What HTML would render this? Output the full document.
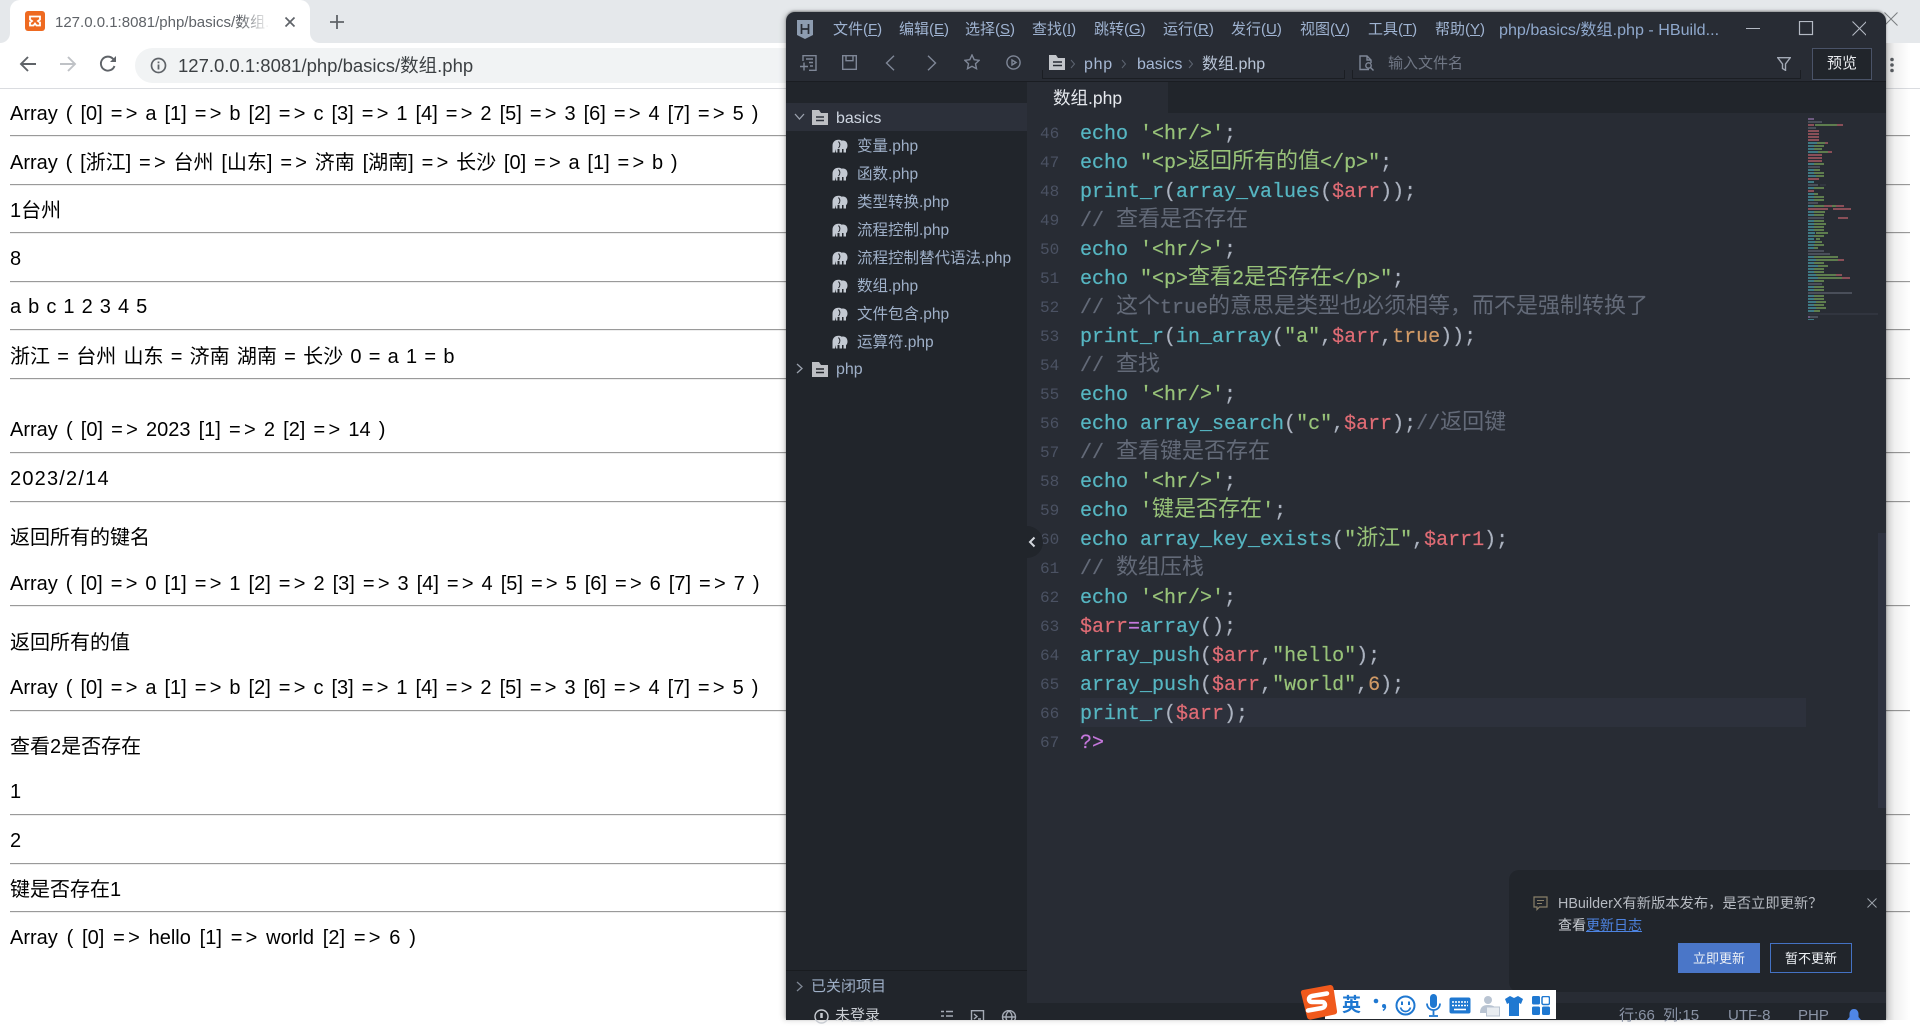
<!DOCTYPE html>
<html lang="zh"><head><meta charset="utf-8"><title>数组.php</title>
<style>
html,body{margin:0;padding:0;background:#fff}
body{width:1920px;height:1020px;position:relative;overflow:hidden;font-family:"Liberation Sans","Noto Sans CJK SC",sans-serif}
div,span,svg{position:absolute}
.l span,.m u{position:static}
.t{white-space:nowrap}
.p{left:10px;font-size:20px;line-height:30px;color:#000;white-space:nowrap;word-spacing:2.450px}
.p b{font-weight:400;letter-spacing:3.3px}
.h{left:10px;width:1900px;height:1px;background:#9a9a9a;border-bottom:1px solid #eee}
.m{top:19px;font-size:15px;line-height:22px;color:#9fb3d1;white-space:nowrap}
.m u{text-underline-offset:1px}
.f{left:857px;font-size:15.500px;line-height:24px;color:#9fb0c8;white-space:nowrap}
.e{left:832px}
.n{left:1040px;width:20px;font:16px/29px "Liberation Mono",monospace;color:#4b5263}
.l{left:1080px;margin-top:2px;font:20px/29px "Liberation Mono","Noto Sans CJK SC",monospace;color:#abb2bf;white-space:pre;-webkit-text-stroke:.2px}
.l i{font:22px/0 "Noto Sans CJK SC",sans-serif;font-style:normal;-webkit-text-stroke:0}
.c{color:#56b6c2}.g{color:#98c379}.r{color:#e06c75}.o{color:#d19a66}.x{color:#636a78}.v{color:#c678dd}
.ic{fill:none;stroke:#7f8797;stroke-width:1.4}
</style></head><body>

<!-- chrome -->
<div style="left:0;top:0;width:1920px;height:43px;background:#e5e8eb"></div>
<div style="left:10px;top:0;width:300px;height:43px;background:#fff;border-radius:10px 10px 0 0"></div>
<div style="left:0;top:33px;width:10px;height:10px;background:#fff"></div><div style="left:0;top:33px;width:10px;height:10px;background:#e5e8eb;border-radius:0 0 10px 0"></div>
<div style="left:310px;top:33px;width:10px;height:10px;background:#fff"></div><div style="left:310px;top:33px;width:10px;height:10px;background:#e5e8eb;border-radius:0 0 0 10px"></div>
<svg style="left:25px;top:11px" width="20" height="20" viewBox="0 0 20 20"><rect width="20" height="20" rx="3" fill="#ee6a21"/><path d="M5 5.500h3.500l3 0h3.500v3l-2 1.500 2 1.500v3h-3.500l-1.500-2-1.500 2H5v-3l2-1.500-2-1.500z" fill="none" stroke="#fff" stroke-width="1.800"/></svg>
<span class="t" style="left:55px;top:12px;width:220px;overflow:hidden;font-size:15px;line-height:22px;color:#5f6368">127.0.0.1:8081/php/basics/数组.php</span>
<div style="left:240px;top:8px;width:35px;height:28px;background:linear-gradient(90deg,rgba(255,255,255,0),#fff 85%)"></div>
<svg style="left:284px;top:16px" width="12" height="12"><path d="M1.500 1.500l9 9M10.500 1.500l-9 9" stroke="#5f6368" stroke-width="1.700"/></svg>
<svg style="left:329px;top:14px" width="16" height="16"><path d="M8 1v14M1 8h14" stroke="#5f6368" stroke-width="1.800"/></svg>
<div style="left:0;top:43px;width:1920px;height:45px;background:#fff"></div>
<div style="left:0;top:88px;width:1920px;height:1px;background:#dadce0"></div>
<svg style="left:19px;top:55px" width="18" height="18"><path d="M17 9H2M9 2L2 9l7 7" fill="none" stroke="#5f6368" stroke-width="1.900"/></svg>
<svg style="left:59px;top:55px" width="18" height="18"><path d="M1 9h15M9 2l7 7-7 7" fill="none" stroke="#bfc2c6" stroke-width="1.900"/></svg>
<svg style="left:99px;top:55px" width="18" height="18"><path d="M15.500 11a7 7 0 1 1-1.500-7.200L16.500 6" fill="none" stroke="#5f6368" stroke-width="1.900"/><path d="M17 1v6h-6z" fill="#5f6368"/></svg>
<div style="left:135px;top:48px;width:700px;height:35px;border-radius:18px;background:#f1f3f4"></div>
<svg style="left:150px;top:57px" width="17" height="17"><circle cx="8.500" cy="8.500" r="7" fill="none" stroke="#5f6368" stroke-width="1.700"/><path d="M8.500 7.500v5M8.500 4.500v1.800" stroke="#5f6368" stroke-width="1.800"/></svg>
<span class="t" style="left:178px;top:52px;font-size:18.500px;line-height:27px;color:#3c4043">127.0.0.1:8081/php/basics/数组.php</span>
<svg style="left:1889px;top:57px" width="6" height="16"><circle cx="3" cy="2.500" r="1.800" fill="#5f6368"/><circle cx="3" cy="8" r="1.800" fill="#5f6368"/><circle cx="3" cy="13.500" r="1.800" fill="#5f6368"/></svg>
<svg style="left:1884px;top:12px" width="14" height="14"><path d="M.5.500l13 13M13.500.500l-13 13" stroke="#7a7d80" stroke-width="1"/></svg>

<!-- page -->
<span class="p" style="top:99px">Array ( [0] <b>=</b>&gt; a [1] <b>=</b>&gt; b [2] <b>=</b>&gt; c [3] <b>=</b>&gt; 1 [4] <b>=</b>&gt; 2 [5] <b>=</b>&gt; 3 [6] <b>=</b>&gt; 4 [7] <b>=</b>&gt; 5 )</span><div class="h" style="top:135px"></div>
<span class="p" style="top:148px;word-spacing:2.270px">Array ( [浙江] <b>=</b>&gt; 台州 [山东] <b>=</b>&gt; 济南 [湖南] <b>=</b>&gt; 长沙 [0] <b>=</b>&gt; a [1] <b>=</b>&gt; b )</span><div class="h" style="top:184px"></div>
<span class="p" style="top:196px">1台州</span><div class="h" style="top:232px"></div>
<span class="p" style="top:244px">8</span><div class="h" style="top:281px"></div>
<span class="p" style="top:292px;word-spacing:1.500px">a b c 1 2 3 4 5</span><div class="h" style="top:329px"></div>
<span class="p" style="top:342px;word-spacing:1.700px">浙江 = 台州 山东 = 济南 湖南 = 长沙 0 = a 1 = b</span><div class="h" style="top:378px"></div>
<span class="p" style="top:415px;word-spacing:2.600px">Array ( [0] <b>=</b>&gt; 2023 [1] <b>=</b>&gt; 2 [2] <b>=</b>&gt; 14 )</span><div class="h" style="top:452px"></div>
<span class="p" style="top:464px;letter-spacing:1.200px">2023/2/14</span><div class="h" style="top:501px"></div>
<span class="p" style="top:523px">返回所有的键名</span>
<span class="p" style="top:569px">Array ( [0] <b>=</b>&gt; 0 [1] <b>=</b>&gt; 1 [2] <b>=</b>&gt; 2 [3] <b>=</b>&gt; 3 [4] <b>=</b>&gt; 4 [5] <b>=</b>&gt; 5 [6] <b>=</b>&gt; 6 [7] <b>=</b>&gt; 7 )</span><div class="h" style="top:605px"></div>
<span class="p" style="top:628px">返回所有的值</span>
<span class="p" style="top:673px">Array ( [0] <b>=</b>&gt; a [1] <b>=</b>&gt; b [2] <b>=</b>&gt; c [3] <b>=</b>&gt; 1 [4] <b>=</b>&gt; 2 [5] <b>=</b>&gt; 3 [6] <b>=</b>&gt; 4 [7] <b>=</b>&gt; 5 )</span><div class="h" style="top:710px"></div>
<span class="p" style="top:732px">查看2是否存在</span>
<span class="p" style="top:777px">1</span><div class="h" style="top:814px"></div>
<span class="p" style="top:826px">2</span><div class="h" style="top:863px"></div>
<span class="p" style="top:875px">键是否存在1</span><div class="h" style="top:911px"></div>
<span class="p" style="top:923px;word-spacing:3.250px">Array ( [0] <b>=</b>&gt; hello [1] <b>=</b>&gt; world [2] <b>=</b>&gt; 6 )</span>

<!-- editor window -->
<div style="left:1886px;top:43px;width:24px;height:977px;background:linear-gradient(90deg,rgba(0,0,0,.2),rgba(0,0,0,.06) 35%,rgba(0,0,0,0))"></div>
<div style="left:786px;top:12px;width:1100px;height:1008px;background:#282c34;border-radius:9px 9px 0 0;box-shadow:0 -1px 2px rgba(0,0,0,.35),-2px 0 6px rgba(0,0,0,.18)"></div>

<svg style="left:796px;top:19px" width="18" height="21"><path d="M1 1h16v15l-8 4-8-4z" fill="#8d9cb0"/><path d="M5.500 5v10M12.500 5v10M5.500 10h7" stroke="#282c34" stroke-width="1.700"/></svg>
<span class="m" style="left:833px">文件(<u>F</u>)</span>
<span class="m" style="left:899px">编辑(<u>E</u>)</span>
<span class="m" style="left:965px">选择(<u>S</u>)</span>
<span class="m" style="left:1032px">查找(<u>I</u>)</span>
<span class="m" style="left:1094px">跳转(<u>G</u>)</span>
<span class="m" style="left:1163px">运行(<u>R</u>)</span>
<span class="m" style="left:1231px">发行(<u>U</u>)</span>
<span class="m" style="left:1300px">视图(<u>V</u>)</span>
<span class="m" style="left:1368px">工具(<u>T</u>)</span>
<span class="m" style="left:1435px">帮助(<u>Y</u>)</span>
<span class="m" style="left:1499px;font-size:16.100px;color:#8fa8cc">php/basics/数组.php - HBuild...</span>
<svg style="left:1746px;top:21px" width="120" height="15"><path d="M0 7.500h14" stroke="#b4bac4"/><rect x="53.500" y=".5" width="13" height="13" fill="none" stroke="#b4bac4" stroke-width="1.200"/><path d="M106.500.5l14 14M120.500.5l-14 14" stroke="#b4bac4" stroke-width="1.100"/></svg>

<!-- toolbar -->
<div style="left:786px;top:81px;width:1100px;height:1px;background:#1a1d22"></div>
<svg style="left:800px;top:55px" width="17" height="17"><path class="ic" d="M3 6V.7h13v14.600H9M6 4h7M9 7.500h4M10 11h3M0 11.500h8M4 7.500v8"/></svg>
<svg style="left:842px;top:55px" width="15" height="15"><path class="ic" d="M.7.7h13.600v13.600H.7zM4 .7v5h7v-5"/></svg>
<svg style="left:885px;top:55px" width="10" height="16"><path class="ic" d="M9 .7L1.500 8 9 15.300"/></svg>
<svg style="left:927px;top:55px" width="10" height="16"><path class="ic" d="M1 .7L8.500 8 1 15.300"/></svg>
<svg style="left:964px;top:54px" width="16" height="16"><path class="ic" d="M8 1l2.200 4.700 5 .6-3.700 3.400 1 5L8 12.300 3.500 14.700l1-5L.8 6.300l5-.6z"/></svg>
<svg style="left:1006px;top:55px" width="15" height="15"><circle class="ic" cx="7.500" cy="7.500" r="6.600"/><path class="ic" d="M6 5l4 2.500L6 10z"/></svg>
<svg style="left:1049px;top:55px" width="17" height="15"><path d="M0 0h7l2 3h7v12H0z" fill="#c3c6cb"/><path d="M4 7h9M4 10.500h9" stroke="#282c34" stroke-width="1.500"/></svg>
<svg style="left:1070px;top:59px" width="6" height="10"><path d="M1 1l3.500 4L1 9" fill="none" stroke="#5d6471"/></svg>
<span class="t" style="left:1084px;top:53px;font-size:16px;line-height:24px;color:#a6b8d4;letter-spacing:.7px">php</span>
<svg style="left:1121px;top:59px" width="6" height="10"><path d="M1 1l3.500 4L1 9" fill="none" stroke="#5d6471"/></svg>
<span class="t" style="left:1137px;top:53px;font-size:16px;line-height:24px;color:#a6b8d4">basics</span>
<svg style="left:1188px;top:59px" width="6" height="10"><path d="M1 1l3.500 4L1 9" fill="none" stroke="#5d6471"/></svg>
<span class="t" style="left:1202px;top:53px;font-size:16px;line-height:24px;color:#b8c4d6">数组.php</span>
<div style="left:1042px;top:70px;width:301px;height:8px;border:1px solid #1b1e23;border-top:0"></div>
<div style="left:1352px;top:70px;width:447px;height:8px;border:1px solid #1b1e23;border-top:0"></div>
<svg style="left:1359px;top:55px" width="16" height="16"><path class="ic" d="M10 14.500H1V1h7l4 4v3M8 1v4h4"/><circle class="ic" cx="9.500" cy="10.500" r="2.700"/><path class="ic" d="M11.500 12.500l3 3"/></svg>
<span class="t" style="left:1388px;top:53px;font-size:15px;line-height:22px;color:#707785">输入文件名</span>
<svg style="left:1777px;top:57px" width="14" height="14"><path class="ic" style="stroke:#a3aab6" d="M.7.700h12.600L8.500 7v6.300L5.500 11.500V7z"/></svg>
<div style="left:1812px;top:48px;width:58px;height:30px;border:1px solid #4a5368;background:#21252b"></div>
<span class="t" style="left:1827px;top:53px;font-size:15px;line-height:22px;color:#e8eaee">预览</span>

<!-- sidebar -->
<div style="left:786px;top:82px;width:241px;height:921px;background:#21252b"></div>
<div style="left:786px;top:103px;width:241px;height:28px;background:#2c303a"></div>
<svg style="left:794px;top:113px" width="11" height="8"><path d="M1 1l4.500 5L10 1" fill="none" stroke="#9aa1ad" stroke-width="1.300"/></svg>
<svg style="left:812px;top:110px" width="16" height="15"><path d="M0 0h7l2 3h7v12H0z" fill="#bdbfc3"/><path d="M4 7h8M4 10.500h8" stroke="#2c303a" stroke-width="1.500"/></svg>
<span class="f" style="left:836px;top:107px;font-size:16px;color:#ced5e0">basics</span>

<svg width="0" height="0" style="position:absolute"><defs><symbol id="el" viewBox="0 0 16 15"><path d="M.5 13.500V7C.5 3 3 .8 6.500.8c1.300 0 2.300.3 3.200.9C12.500.8 15.500 2.500 15.500 6.500c0 1.500-.5 2.800-1.500 3.700v3.300h-2.500V10H10v3.500H7.500V10H5.500v3.500H4V10l-1 3.500z" fill="#c3c9d2"/><path d="M6.500 2.500C8.200 4.500 8.200 7 6.500 9" fill="none" stroke="#21252b" stroke-width="1"/></symbol></defs></svg>
<svg class="e" style="top:139px" width="16" height="15"><use href="#el"/></svg><span class="f" style="top:135px">变量.php</span>
<svg class="e" style="top:167px" width="16" height="15"><use href="#el"/></svg><span class="f" style="top:163px">函数.php</span>
<svg class="e" style="top:195px" width="16" height="15"><use href="#el"/></svg><span class="f" style="top:191px">类型转换.php</span>
<svg class="e" style="top:223px" width="16" height="15"><use href="#el"/></svg><span class="f" style="top:219px">流程控制.php</span>
<svg class="e" style="top:251px" width="16" height="15"><use href="#el"/></svg><span class="f" style="top:247px">流程控制替代语法.php</span>
<svg class="e" style="top:279px" width="16" height="15"><use href="#el"/></svg><span class="f" style="top:275px">数组.php</span>
<svg class="e" style="top:307px" width="16" height="15"><use href="#el"/></svg><span class="f" style="top:303px">文件包含.php</span>
<svg class="e" style="top:335px" width="16" height="15"><use href="#el"/></svg><span class="f" style="top:331px">运算符.php</span>
<svg style="left:796px;top:363px" width="8" height="11"><path d="M1 1l5 4.500L1 10" fill="none" stroke="#9aa1ad" stroke-width="1.300"/></svg>
<svg style="left:812px;top:362px" width="16" height="15"><path d="M0 0h7l2 3h7v12H0z" fill="#bdbfc3"/><path d="M4 7h8M4 10.500h8" stroke="#21252b" stroke-width="1.500"/></svg>
<span class="f" style="left:836px;top:358px;font-size:16px">php</span>
<div style="left:786px;top:970px;width:241px;height:1px;background:#191c20"></div>
<svg style="left:796px;top:981px" width="8" height="11"><path d="M1 1l5 4.500L1 10" fill="none" stroke="#7f8794" stroke-width="1.300"/></svg>
<span class="t" style="left:811px;top:976px;font-size:15px;line-height:22px;color:#9fb0c8">已关闭项目</span>

<!-- status bar -->
<div style="left:786px;top:1003px;width:1100px;height:17px;background:#21252b"></div>
<svg style="left:814px;top:1009px" width="15" height="15"><circle class="ic" style="stroke:#c8ccd2" cx="7.500" cy="7.500" r="6.500"/><path d="M7.500 4v5" stroke="#c8ccd2" stroke-width="2.500"/></svg>
<span class="t" style="left:835px;top:1005px;font-size:15px;line-height:22px;color:#c8ccd2">未登录</span>
<svg style="left:941px;top:1010px" width="78" height="10"><path d="M0 1.500h3M5 1.500h7M0 6h3M5 6h7" stroke="#a5abb6" stroke-width="1.400"/><path class="ic" style="stroke:#a5abb6" d="M30.500.7h12v12h-12zM33 4l3 2.500L33 9M37 9h3"/><circle class="ic" style="stroke:#a5abb6" cx="68" cy="7" r="6.500"/><path class="ic" style="stroke:#a5abb6" d="M62 7h12M68 1c-4 3-4 9 0 12M68 1c4 3 4 9 0 12"/></svg>
<span class="t" style="left:1619px;top:1005px;font-size:15px;line-height:22px;color:#8a93a5">行:66&nbsp; 列:15</span>
<span class="t" style="left:1728px;top:1005px;font-size:15px;line-height:22px;color:#8a93a5">UTF-8</span>
<span class="t" style="left:1798px;top:1005px;font-size:15px;line-height:22px;color:#8a93a5">PHP</span>
<svg style="left:1847px;top:1009px" width="14" height="11"><path d="M7 0c3 0 4.500 2.500 4.500 5v3L14 11H0l2.500-3V5C2.500 2.500 4 0 7 0z" fill="#4f86e6"/></svg>

<!-- tabs -->
<div style="left:1027px;top:82px;width:859px;height:31px;background:#21252b"></div>
<div style="left:1027px;top:82px;width:141px;height:31px;background:#282c34"></div>
<span class="t" style="left:1053px;top:86px;font-size:17.500px;line-height:24px;color:#e6e9ee">数组.php</span>

<!-- code -->
<div style="left:1080px;top:698px;width:726px;height:29px;background:#2d313c"></div>
<div style="left:1878px;top:533px;width:8px;height:275px;background:#2f3340"></div>
<div class="n" style="top:120px">46</div><div class="l" style="top:118px"><span class="c">echo</span> <span class="g">'&lt;hr/&gt;'</span>;</div>
<div class="n" style="top:149px">47</div><div class="l" style="top:147px"><span class="c">echo</span> <span class="g">"&lt;p&gt;<i>返回所有的值</i>&lt;/p&gt;"</span>;</div>
<div class="n" style="top:178px">48</div><div class="l" style="top:176px"><span class="c">print_r</span>(<span class="c">array_values</span>(<span class="r">$arr</span>));</div>
<div class="n" style="top:207px">49</div><div class="l x" style="top:205px">// <i>查看是否存在</i></div>
<div class="n" style="top:236px">50</div><div class="l" style="top:234px"><span class="c">echo</span> <span class="g">'&lt;hr/&gt;'</span>;</div>
<div class="n" style="top:265px">51</div><div class="l" style="top:263px"><span class="c">echo</span> <span class="g">"&lt;p&gt;<i>查看</i>2<i>是否存在</i>&lt;/p&gt;"</span>;</div>
<div class="n" style="top:294px">52</div><div class="l x" style="top:292px">// <i>这个</i>true<i>的意思是类型也必须相等，而不是强制转换了</i></div>
<div class="n" style="top:323px">53</div><div class="l" style="top:321px"><span class="c">print_r</span>(<span class="c">in_array</span>(<span class="g">"a"</span>,<span class="r">$arr</span>,<span class="o">true</span>));</div>
<div class="n" style="top:352px">54</div><div class="l x" style="top:350px">// <i>查找</i></div>
<div class="n" style="top:381px">55</div><div class="l" style="top:379px"><span class="c">echo</span> <span class="g">'&lt;hr/&gt;'</span>;</div>
<div class="n" style="top:410px">56</div><div class="l" style="top:408px"><span class="c">echo array_search</span>(<span class="g">"c"</span>,<span class="r">$arr</span>);<span class="x">//<i>返回键</i></span></div>
<div class="n" style="top:439px">57</div><div class="l x" style="top:437px">// <i>查看键是否存在</i></div>
<div class="n" style="top:468px">58</div><div class="l" style="top:466px"><span class="c">echo</span> <span class="g">'&lt;hr/&gt;'</span>;</div>
<div class="n" style="top:497px">59</div><div class="l" style="top:495px"><span class="c">echo</span> <span class="g">'<i>键是否存在</i>'</span>;</div>
<div class="n" style="top:526px">60</div><div class="l" style="top:524px"><span class="c">echo array_key_exists</span>(<span class="g">"<i>浙江</i>"</span>,<span class="r">$arr1</span>);</div>
<div class="n" style="top:555px">61</div><div class="l x" style="top:553px">// <i>数组压栈</i></div>
<div class="n" style="top:584px">62</div><div class="l" style="top:582px"><span class="c">echo</span> <span class="g">'&lt;hr/&gt;'</span>;</div>
<div class="n" style="top:613px">63</div><div class="l" style="top:611px"><span class="r">$arr</span><span class="v">=</span><span class="c">array</span>();</div>
<div class="n" style="top:642px">64</div><div class="l" style="top:640px"><span class="c">array_push</span>(<span class="r">$arr</span>,<span class="g">"hello"</span>);</div>
<div class="n" style="top:671px">65</div><div class="l" style="top:669px"><span class="c">array_push</span>(<span class="r">$arr</span>,<span class="g">"world"</span>,<span class="o">6</span>);</div>
<div class="n" style="top:700px">66</div><div class="l" style="top:698px"><span class="c">print_r</span>(<span class="r">$arr</span>);</div>
<div class="n" style="top:729px">67</div><div class="l v" style="top:727px">?&gt;</div>

<!-- collapse handle -->
<div style="left:1011px;top:526px;width:32px;height:32px;border-radius:50%;background:#21252b;clip-path:inset(0 0 0 16px)"></div>
<svg style="left:1028px;top:536px" width="8" height="12"><path d="M6.500 1.500L2 6l4.500 4.500" fill="none" stroke="#d3d7dd" stroke-width="2"/></svg>

<!-- minimap -->
<svg style="left:1808px;top:118px" width="72" height="202" fill="none" stroke-width="2">
<path stroke="#6d5a80" d="M0 1h6"/>
<path stroke="#4a4f5a" d="M0 4h14M0 10h8M0 49h12M0 67h10M0 85h10M0 136h22M0 166h14M0 199h10M0 175h44M0 133h16M0 100h16"/>
<path stroke="#8a4f58" d="M0 7h6M0 13h11M0 16h11M0 19h11M0 22h11M0 37h14M0 40h14M0 43h14M0 61h11M0 91h20M25 91h18M30 100h10M0 73h6"/>
<path stroke="#3f7a85" d="M0 25h9M0 28h6M0 31h6M0 34h10M0 46h9M0 52h6M0 55h6M0 58h8M0 64h6M0 70h8M0 76h6M0 79h6M0 82h6M0 88h6M0 94h6M0 97h6M0 103h6M0 106h6M0 109h6M0 112h8M0 115h7M0 118h8M0 121h6M0 124h7M0 127h6M0 130h6M0 139h6M0 142h8M0 145h6M0 148h10M0 151h6M0 154h6M0 157h8M0 160h10M0 163h6M0 169h6M0 172h6M0 178h6M0 181h6M0 184h8M0 187h6M0 190h8M0 193h6M0 196h6M0 202h6"/>
<path stroke="#5e7d4e" d="M7 7h22M9 25h8M6 28h10M6 31h8M10 34h10M6 46h10M6 52h6M6 55h10M8 58h8M6 70h10M6 76h4M6 79h10M6 82h10M6 88h22M6 94h11M6 97h10M6 103h10M6 106h12M6 109h10M6 112h10M8 115h12M6 118h10M8 121h4M7 124h7M6 127h10M6 130h4M6 139h24M8 142h22M6 145h10M10 148h10M6 151h10M6 154h10M8 157h20M10 160h24M6 163h10M6 169h10M6 172h10M6 178h10M6 181h10M8 184h10M6 187h10M8 190h10M6 193h6M6 196h10"/>
<path stroke="#8a4f58" d="M29 7h6M17 25h3M20 34h4M16 88h8M28 88h8M30 142h6M28 157h6M34 160h8"/>
<path stroke="#31353f" d="M12 67h6M0 196h70"/>
<path stroke="#6d5a80" d="M0 199h2"/>
</svg>

<!-- notification -->
<div style="left:1509px;top:870px;width:377px;height:122px;background:#21252b;border-radius:10px 0 0 10px"></div>
<svg style="left:1533px;top:896px" width="15" height="15"><path d="M1 1h13v10H6.500L4 13.500V11H1z" fill="none" stroke="#8a8069" stroke-width="1.200"/><path d="M4 4.500h7M4 7.500h5" stroke="#8a8069"/></svg>
<span class="t" style="left:1558px;top:894px;font-size:14.300px;line-height:20px;color:#b6bac1">HBuilderX有新版本发布，是否立即更新？</span>
<svg style="left:1867px;top:898px" width="10" height="10"><path d="M.5.500l9 9M9.500.500l-9 9" stroke="#9ea3ab"/></svg>
<span class="t" style="left:1558px;top:915px;font-size:14px;line-height:20px;color:#c9ccd2">查看<u style="color:#4d83e0">更新日志</u></span>
<div style="left:1678px;top:943px;width:82px;height:30px;background:#4a76c8"></div>
<span class="t" style="left:1678px;top:949px;width:82px;text-align:center;font-size:13px;line-height:20px;color:#eef1f6">立即更新</span>
<div style="left:1770px;top:943px;width:80px;height:28px;border:1px solid #4472c4"></div>
<span class="t" style="left:1770px;top:949px;width:82px;text-align:center;font-size:13px;line-height:20px;color:#eef1f6">暂不更新</span>

<!-- sogou bar -->
<div style="left:1325px;top:990px;width:231px;height:29px;background:#fff"></div>
<svg style="left:1298px;top:984px" width="42" height="36" viewBox="0 0 42 36"><path d="M5 6l27-5c2 0 3 1 3.500 3L39 27c.3 2-.5 3-2.500 3.500L13 35.500c-2 .4-3.500-.5-4-2.500L3 9c-.4-1.500.5-2.700 2-3z" fill="#f0591c"/><path d="M29 9.500L14 12c-4 .7-4 6 0 6l10 0c4 0 4 5.500 0 6l-14 2.500" fill="none" stroke="#fff" stroke-width="4.500" stroke-linecap="round"/></svg>
<span class="t" style="left:1342px;top:994px;font-size:19px;line-height:24px;font-weight:700;color:#1f78d1">英</span>
<svg style="left:1372px;top:997px" width="16" height="16"><circle cx="4" cy="4" r="2.300" fill="#1f78d1"/><circle cx="12" cy="9" r="2" fill="#1f78d1"/><path d="M13.500 9.500c0 2-1 3-2.500 4" fill="none" stroke="#1f78d1" stroke-width="1.500"/></svg>
<svg style="left:1395px;top:995px" width="21" height="21"><circle cx="10.500" cy="10.500" r="9" fill="none" stroke="#1f78d1" stroke-width="2"/><path d="M7 6.500v3.500M14 6.500v3.500" stroke="#1f78d1" stroke-width="2"/><path d="M5.500 12.500c1 3 3 4 5 4s4-1 5-4" fill="none" stroke="#1f78d1" stroke-width="1.700"/></svg>
<svg style="left:1426px;top:994px" width="15" height="24"><rect x="4" y="0" width="7" height="14" rx="3.500" fill="#1f78d1"/><path d="M1 9.500c0 4 3 6.500 6.500 6.500s6.500-2.500 6.500-6.500M7.500 16v5M3 22h9" fill="none" stroke="#1f78d1" stroke-width="1.800"/></svg>
<svg style="left:1449px;top:997px" width="22" height="17"><rect x=".5" y=".5" width="21" height="16" rx="2" fill="#1f78d1"/><path d="M3 5h16M3 8.500h16" stroke="#fff" stroke-width="1.600" stroke-dasharray="2 1"/><path d="M5 12.500h12" stroke="#fff" stroke-width="1.600"/></svg>
<svg style="left:1479px;top:995px" width="21" height="22"><circle cx="9" cy="5" r="4" fill="#b9c4d2"/><path d="M1 18c0-6 3-8 8-8s8 2 8 4H7v4z" fill="#b9c4d2"/><rect x="7.500" y="12" width="13" height="9" fill="#e9edf1" stroke="#b9c4d2"/></svg>
<svg style="left:1505px;top:996px" width="18" height="20"><path d="M5 0l4 2 4-2 5 3-2 5-2-1v13H4V7L2 8 0 3z" fill="#1f78d1"/></svg>
<svg style="left:1532px;top:996px" width="18" height="19"><rect width="8" height="8.500" rx="1.500" fill="#1f78d1"/><rect x="10" y=".5" width="7.500" height="8" rx="1.500" fill="#fff" stroke="#1f78d1" stroke-width="1.500"/><rect y="10.500" width="8" height="8.500" rx="1.500" fill="#1f78d1"/><rect x="10" y="10.500" width="8" height="8.500" rx="1.500" fill="#1f78d1"/></svg>
</body></html>
